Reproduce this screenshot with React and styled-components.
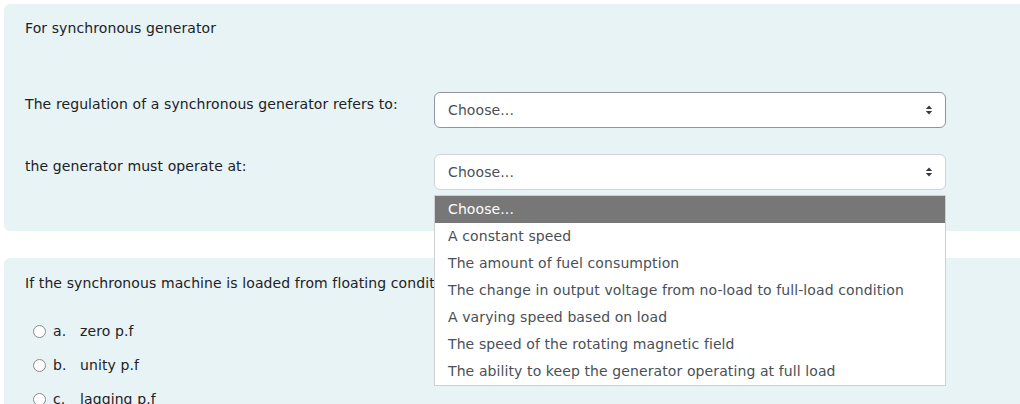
import styled, { createGlobalStyle } from "styled-components";

const GlobalStyle = createGlobalStyle`
  body {
    margin: 0;
    background: #fff;
    font-family: "DejaVu Sans", "Liberation Sans", sans-serif;
    font-size: 14px;
    letter-spacing: 0.1px;
    color: #1d2125;
  }
`;

const Page = styled.div`
  width: 1040px;
  height: 404px;
  overflow: hidden;
  box-sizing: border-box;
  padding: 4px 0 0 4px;
  display: flex;
  flex-direction: column;
  gap: 27px;
`;

const Panel = styled.div`
  position: relative;
  flex: 0 0 auto;
  background: #e7f3f5;
  border-radius: 6px;
  padding: ${(p) => p.$top}px 21px 0;
  height: ${(p) => p.$height}px;
  box-sizing: border-box;
`;

const Intro = styled.div`
  line-height: 21px;
  margin-bottom: ${(p) => p.$gap}px;
  white-space: nowrap;
`;

const Rows = styled.div`
  display: flex;
  flex-direction: column;
  gap: 26px;
`;

const Row = styled.div`
  display: flex;
  align-items: flex-start;
`;

const Label = styled.div`
  flex: 0 0 409px;
  line-height: 21px;
  padding-top: 2px;
  white-space: nowrap;
`;

const SelectWrap = styled.div`
  position: relative;
  width: 512px;
`;

const Select = styled.div`
  height: 36px;
  box-sizing: border-box;
  border: 1px solid ${(p) => (p.$focused ? "#8f959e" : "#ced4da")};
  border-radius: 6px;
  background: #fff;
  display: flex;
  align-items: center;
  justify-content: space-between;
  padding: 0 12px 0 13px;
  color: #495057;
`;

const Arrows = () => (
  <svg width="8" height="10" viewBox="0 0 8 10" aria-hidden="true">
    <path d="M4 0.5 L7.2 4 H0.8 Z" fill="#343a40" />
    <path d="M4 9.5 L7.2 6 H0.8 Z" fill="#343a40" />
  </svg>
);

const Menu = styled.ul`
  position: absolute;
  top: 41px;
  left: 0;
  right: 0;
  z-index: 10;
  margin: 0;
  padding: 0;
  list-style: none;
  background: #fff;
  border: 1px solid #cfcfcf;
`;

const MenuItem = styled.li`
  height: 27px;
  line-height: 27px;
  padding-left: 13px;
  white-space: nowrap;
  background: ${(p) => (p.$active ? "#777777" : "transparent")};
  color: ${(p) => (p.$active ? "#fff" : "#495057")};
`;

const Options = styled.div`
  margin-top: 20px;
  display: flex;
  flex-direction: column;
`;

const OptionRow = styled.label`
  display: flex;
  align-items: center;
  height: 34px;
  padding-left: 8px;
`;

const Radio = styled.span`
  width: 13px;
  height: 13px;
  box-sizing: border-box;
  border: 1px solid #8a8a8a;
  border-radius: 50%;
  background: #fff;
  margin-right: 7px;
`;

const Letter = styled.span`
  width: 27px;
`;

const choices = [
  "Choose...",
  "A constant speed",
  "The amount of fuel consumption",
  "The change in output voltage from no-load to full-load condition",
  "A varying speed based on load",
  "The speed of the rotating magnetic field",
  "The ability to keep the generator operating at full load",
];

const answers = [
  ["a.", "zero p.f"],
  ["b.", "unity p.f"],
  ["c.", "lagging p.f"],
];

export default function App() {
  return (
    <>
      <GlobalStyle />
      <Page>
        <Panel $top={14} $height={227}>
          <Intro $gap={53}>For synchronous generator</Intro>
          <Rows>
            <Row>
              <Label>The regulation of a synchronous generator refers to:</Label>
              <SelectWrap>
                <Select $focused>
                  Choose...
                  <Arrows />
                </Select>
              </SelectWrap>
            </Row>
            <Row>
              <Label>the generator must operate at:</Label>
              <SelectWrap>
                <Select>
                  Choose...
                  <Arrows />
                </Select>
                <Menu>
                  {choices.map((c, i) => (
                    <MenuItem key={c} $active={i === 0}>
                      {c}
                    </MenuItem>
                  ))}
                </Menu>
              </SelectWrap>
            </Row>
          </Rows>
        </Panel>
        <Panel $top={15} $height={200}>
          <Intro $gap={0}>
            If the synchronous machine is loaded from floating condition, it will operate at
          </Intro>
          <Options>
            {answers.map(([l, t]) => (
              <OptionRow key={l}>
                <Radio />
                <Letter>{l}</Letter>
                {t}
              </OptionRow>
            ))}
          </Options>
        </Panel>
      </Page>
    </>
  );
}
